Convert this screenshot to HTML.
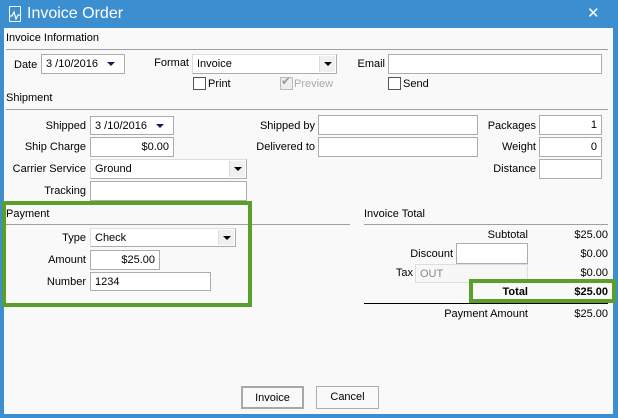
<!DOCTYPE html>
<html><head><style>
*{margin:0;padding:0;box-sizing:border-box}
body{width:618px;height:418px;background:#3b8fd1;font-family:"Liberation Sans","DejaVu Sans",sans-serif;font-size:11px;color:#000;position:relative;overflow:hidden}
.client{position:absolute;left:4px;top:28px;width:609px;height:386px;background:#f9f9f9}
.a{position:absolute;white-space:nowrap}
.r{text-align:right}
.box{position:absolute;background:#fff;border:1px solid #acacac;padding:3px 4px 0;line-height:13px;white-space:nowrap}
.hl{position:absolute;height:1px;background:#a0a0a0}
.dd{position:absolute;right:1px;top:1px;bottom:1px;width:16px;background:#f0f0f0;border-left:1px solid #ddd}
.dd:after{content:"";position:absolute;left:4px;top:6px;border:4px solid transparent;border-top:4px solid #000;border-bottom:0}
.tri{position:absolute;right:9px;top:7px;border:4px solid transparent;border-top:4px solid #1a1a5a;border-bottom:0}
.cb{position:absolute;width:13px;height:13px;border:1px solid #555;background:#fff}
.btn{position:absolute;height:23px;border:1px solid #adadad;background:#f9f9f9;text-align:center;line-height:20px}
.green{position:absolute;border:4px solid #5c9e2a}
</style></head><body>
<div class="a" style="left:9px;top:6px;width:12px;height:16px;border:1.5px solid #fff;border-radius:1px"></div>
<svg class="a" style="left:9px;top:10px" width="12" height="10"><polyline points="1,6 3,6 5,2 7,9 9,5 11,5" fill="none" stroke="#fff" stroke-width="1.2"/></svg>
<div class="a" style="left:27px;top:5px;font-size:16px;color:#fff">Invoice Order</div>
<div class="a" style="left:587px;top:4px;font-size:15px;color:#fff">✕</div>
<div class="client"></div>

<div class="a" style="left:6px;top:32px">Invoice Information</div>
<div class="hl" style="left:6px;top:49px;width:602px"></div>
<div class="a" style="left:14px;top:59px">Date</div>
<div class="box" style="left:41px;top:54px;width:84px;height:20px">3 /10/2016<span class="tri"></span></div>
<div class="a r" style="left:140px;width:49px;top:57px">Format</div>
<div class="box" style="left:192px;top:54px;width:145px;height:20px;border-color:#ddd #acacac #acacac #ddd">Invoice<span class="dd"></span></div>
<div class="a r" style="left:340px;width:45px;top:58px">Email</div>
<div class="box" style="left:388px;top:54px;width:214px;height:20px"></div>
<div class="cb" style="left:193px;top:77px"></div><div class="a" style="left:208px;top:78px">Print</div>
<div class="cb" style="left:280px;top:77px;border-color:#bbb;background:#eee"></div><div class="a" style="left:281px;top:74px;color:#999;font-size:12px">✔</div><div class="a" style="left:294px;top:78px;color:#aaa">Preview</div>
<div class="cb" style="left:388px;top:77px"></div><div class="a" style="left:403px;top:78px">Send</div>

<div class="a" style="left:6px;top:92px">Shipment</div>
<div class="hl" style="left:6px;top:109px;width:602px"></div>
<div class="a r" style="left:0;width:86px;top:120px">Shipped</div>
<div class="box" style="left:90px;top:116px;width:84px;height:19px">3 /10/2016<span class="tri"></span></div>
<div class="a r" style="left:0;width:86px;top:141px">Ship Charge</div>
<div class="box r" style="left:90px;top:137px;width:84px;height:20px">$0.00</div>
<div class="a r" style="left:0;width:86px;top:163px">Carrier Service</div>
<div class="box" style="left:90px;top:159px;width:157px;height:20px;border-color:#ddd #acacac #acacac #ddd">Ground<span class="dd"></span></div>
<div class="a r" style="left:0;width:86px;top:185px">Tracking</div>
<div class="box" style="left:90px;top:181px;width:157px;height:20px"></div>
<div class="a r" style="left:200px;width:115px;top:120px">Shipped by</div>
<div class="box" style="left:318px;top:115px;width:160px;height:20px"></div>
<div class="a r" style="left:200px;width:115px;top:141px">Delivered to</div>
<div class="box" style="left:318px;top:137px;width:160px;height:20px"></div>
<div class="a r" style="left:460px;width:76px;top:120px">Packages</div>
<div class="box r" style="left:539px;top:115px;width:63px;height:20px">1</div>
<div class="a r" style="left:460px;width:76px;top:141px">Weight</div>
<div class="box r" style="left:539px;top:137px;width:63px;height:20px">0</div>
<div class="a r" style="left:460px;width:76px;top:163px">Distance</div>
<div class="box" style="left:539px;top:159px;width:63px;height:20px"></div>

<div class="a" style="left:6px;top:208px">Payment</div>
<div class="hl" style="left:6px;top:224px;width:344px"></div>
<div class="a r" style="left:0;width:86px;top:232px">Type</div>
<div class="box" style="left:90px;top:228px;width:146px;height:19px;border-color:#ddd #acacac #acacac #ddd">Check<span class="dd"></span></div>
<div class="a r" style="left:0;width:86px;top:254px">Amount</div>
<div class="box r" style="left:90px;top:250px;width:70px;height:20px">$25.00</div>
<div class="a r" style="left:0;width:86px;top:276px">Number</div>
<div class="box" style="left:90px;top:272px;width:121px;height:19px">1234</div>
<div class="green" style="left:2px;top:201px;width:250px;height:106px"></div>

<div class="a" style="left:364px;top:208px">Invoice Total</div>
<div class="hl" style="left:364px;top:224px;width:244px"></div>
<div class="a r" style="left:400px;width:128px;top:229px">Subtotal</div>
<div class="a r" style="left:540px;width:68px;top:229px">$25.00</div>
<div class="a r" style="left:380px;width:73px;top:248px">Discount</div>
<div class="box" style="left:456px;top:243px;width:72px;height:21px"></div>
<div class="a r" style="left:540px;width:68px;top:248px">$0.00</div>
<div class="a r" style="left:380px;width:33px;top:267px">Tax</div>
<div class="box" style="left:415px;top:264px;width:113px;height:19px;border-color:#ddd;background:#f7f7f7;color:#888">OUT</div>
<div class="a r" style="left:540px;width:68px;top:267px">$0.00</div>
<div class="a r" style="left:470px;width:58px;top:286px;font-weight:bold">Total</div>
<div class="a r" style="left:540px;width:68px;top:286px;font-weight:bold">$25.00</div>
<div class="green" style="left:469px;top:279px;width:147px;height:24px"></div>
<div class="a" style="left:364px;top:303px;width:244px;height:1px;background:#000"></div>
<div class="a r" style="left:400px;width:128px;top:308px">Payment Amount</div>
<div class="a r" style="left:540px;width:68px;top:308px">$25.00</div>

<div class="btn" style="left:241px;top:386px;width:63px;border:2px solid #a8a8a8">Invoice</div>
<div class="btn" style="left:316px;top:386px;width:63px">Cancel</div>
</body></html>
